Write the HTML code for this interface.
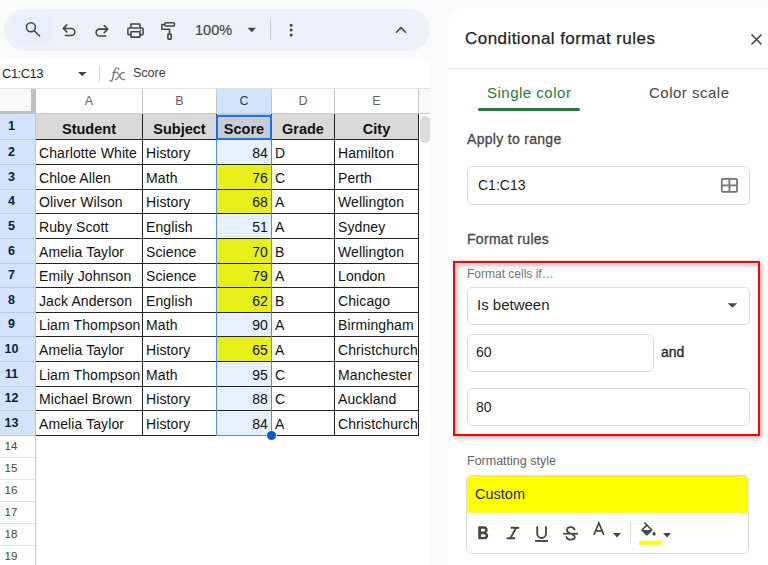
<!DOCTYPE html><html><head><meta charset="utf-8"><style>
*{margin:0;padding:0;box-sizing:border-box}
html,body{width:768px;height:565px;overflow:hidden;background:#f9fbfd;font-family:"Liberation Sans", sans-serif;position:relative}
.a{position:absolute}
.t{position:absolute;white-space:nowrap;font-family:"Liberation Sans", sans-serif}
.cell{position:absolute;font-size:14px;color:#111;white-space:nowrap;overflow:hidden;letter-spacing:0.1px}
</style></head><body><div class="a" style="left:4px;top:9px;width:426px;height:42px;border-radius:21px;background:#eef2f8"></div>
<div class="a" style="left:14px;top:15px;width:39px;height:29px;background:#e9effb;border-radius:2px"></div>
<div class="t" style="left:195px;top:22px;font-size:14.5px;color:#444746;line-height:17px;-webkit-text-stroke:0.2px #444746">100%</div>
<div class="a" style="left:0;top:60px;width:430px;height:28px;background:#fff"></div>
<div class="t" style="left:2px;top:66px;font-size:13px;color:#1f1f1f;line-height:15px;letter-spacing:-0.5px">C1:C13</div>
<div class="a" style="left:99px;top:66px;width:1px;height:17px;background:#dadce0"></div>
<div class="t" style="left:133px;top:66px;font-size:12.5px;color:#3c4043;line-height:15px">Score</div>
<div class="a" style="left:0;top:88px;width:430px;height:477px;background:#fff"></div>
<div class="a" style="left:0;top:88px;width:430px;height:1px;background:#e1e3e1"></div>
<div class="a" style="left:0;top:89px;width:36px;height:26px;background:#c0c0c0"></div>
<div class="a" style="left:0;top:89px;width:31px;height:22px;background:#f8f9fa"></div>
<div class="a" style="left:36px;top:89px;width:106px;height:25px;background:#fff"></div>
<div class="t" style="left:36px;top:96px;width:106px;text-align:center;font-size:12.5px;line-height:11px;color:#5f6368">A</div>
<div class="a" style="left:142px;top:89px;width:1px;height:25px;background:#c7c7c7"></div>
<div class="a" style="left:143px;top:89px;width:73px;height:25px;background:#fff"></div>
<div class="t" style="left:143px;top:96px;width:73px;text-align:center;font-size:12.5px;line-height:11px;color:#5f6368">B</div>
<div class="a" style="left:216px;top:89px;width:1px;height:25px;background:#c7c7c7"></div>
<div class="a" style="left:217px;top:89px;width:54px;height:25px;background:#d3e3fd"></div>
<div class="t" style="left:217px;top:96px;width:54px;text-align:center;font-size:12.5px;line-height:11px;color:#1b3a6b">C</div>
<div class="a" style="left:271px;top:89px;width:1px;height:25px;background:#c7c7c7"></div>
<div class="a" style="left:272px;top:89px;width:62px;height:25px;background:#fff"></div>
<div class="t" style="left:272px;top:96px;width:62px;text-align:center;font-size:12.5px;line-height:11px;color:#5f6368">D</div>
<div class="a" style="left:334px;top:89px;width:1px;height:25px;background:#c7c7c7"></div>
<div class="a" style="left:335px;top:89px;width:83px;height:25px;background:#fff"></div>
<div class="t" style="left:335px;top:96px;width:83px;text-align:center;font-size:12.5px;line-height:11px;color:#5f6368">E</div>
<div class="a" style="left:418px;top:89px;width:1px;height:25px;background:#c7c7c7"></div>
<div class="a" style="left:419px;top:89px;width:11px;height:25px;background:#f8f9fa"></div>
<div class="a" style="left:36px;top:113px;width:394px;height:1px;background:#c7c7c7"></div>
<div class="a" style="left:0;top:114px;width:35px;height:25px;background:#d3e3fd"></div>
<div class="t" style="left:0;top:114px;width:23px;text-align:center;font-size:12.5px;font-weight:bold;line-height:25px;color:#041e49">1</div>
<div class="a" style="left:0;top:139px;width:35px;height:1px;background:#c2c9d6"></div>
<div class="a" style="left:0;top:140px;width:35px;height:24px;background:#d3e3fd"></div>
<div class="t" style="left:0;top:140px;width:23px;text-align:center;font-size:12.5px;font-weight:bold;line-height:24px;color:#041e49">2</div>
<div class="a" style="left:0;top:164px;width:35px;height:1px;background:#c2c9d6"></div>
<div class="a" style="left:0;top:165px;width:35px;height:24px;background:#d3e3fd"></div>
<div class="t" style="left:0;top:165px;width:23px;text-align:center;font-size:12.5px;font-weight:bold;line-height:24px;color:#041e49">3</div>
<div class="a" style="left:0;top:189px;width:35px;height:1px;background:#c2c9d6"></div>
<div class="a" style="left:0;top:190px;width:35px;height:23px;background:#d3e3fd"></div>
<div class="t" style="left:0;top:190px;width:23px;text-align:center;font-size:12.5px;font-weight:bold;line-height:23px;color:#041e49">4</div>
<div class="a" style="left:0;top:213px;width:35px;height:1px;background:#c2c9d6"></div>
<div class="a" style="left:0;top:214px;width:35px;height:24px;background:#d3e3fd"></div>
<div class="t" style="left:0;top:214px;width:23px;text-align:center;font-size:12.5px;font-weight:bold;line-height:24px;color:#041e49">5</div>
<div class="a" style="left:0;top:238px;width:35px;height:1px;background:#c2c9d6"></div>
<div class="a" style="left:0;top:239px;width:35px;height:24px;background:#d3e3fd"></div>
<div class="t" style="left:0;top:239px;width:23px;text-align:center;font-size:12.5px;font-weight:bold;line-height:24px;color:#041e49">6</div>
<div class="a" style="left:0;top:263px;width:35px;height:1px;background:#c2c9d6"></div>
<div class="a" style="left:0;top:264px;width:35px;height:23px;background:#d3e3fd"></div>
<div class="t" style="left:0;top:264px;width:23px;text-align:center;font-size:12.5px;font-weight:bold;line-height:23px;color:#041e49">7</div>
<div class="a" style="left:0;top:287px;width:35px;height:1px;background:#c2c9d6"></div>
<div class="a" style="left:0;top:288px;width:35px;height:24px;background:#d3e3fd"></div>
<div class="t" style="left:0;top:288px;width:23px;text-align:center;font-size:12.5px;font-weight:bold;line-height:24px;color:#041e49">8</div>
<div class="a" style="left:0;top:312px;width:35px;height:1px;background:#c2c9d6"></div>
<div class="a" style="left:0;top:313px;width:35px;height:23px;background:#d3e3fd"></div>
<div class="t" style="left:0;top:313px;width:23px;text-align:center;font-size:12.5px;font-weight:bold;line-height:23px;color:#041e49">9</div>
<div class="a" style="left:0;top:336px;width:35px;height:1px;background:#c2c9d6"></div>
<div class="a" style="left:0;top:337px;width:35px;height:24px;background:#d3e3fd"></div>
<div class="t" style="left:0;top:337px;width:23px;text-align:center;font-size:12.5px;font-weight:bold;line-height:24px;color:#041e49">10</div>
<div class="a" style="left:0;top:361px;width:35px;height:1px;background:#c2c9d6"></div>
<div class="a" style="left:0;top:362px;width:35px;height:24px;background:#d3e3fd"></div>
<div class="t" style="left:0;top:362px;width:23px;text-align:center;font-size:12.5px;font-weight:bold;line-height:24px;color:#041e49">11</div>
<div class="a" style="left:0;top:386px;width:35px;height:1px;background:#c2c9d6"></div>
<div class="a" style="left:0;top:387px;width:35px;height:23px;background:#d3e3fd"></div>
<div class="t" style="left:0;top:387px;width:23px;text-align:center;font-size:12.5px;font-weight:bold;line-height:23px;color:#041e49">12</div>
<div class="a" style="left:0;top:410px;width:35px;height:1px;background:#c2c9d6"></div>
<div class="a" style="left:0;top:411px;width:35px;height:24px;background:#d3e3fd"></div>
<div class="t" style="left:0;top:411px;width:23px;text-align:center;font-size:12.5px;font-weight:bold;line-height:24px;color:#041e49">13</div>
<div class="a" style="left:0;top:435px;width:35px;height:1px;background:#c2c9d6"></div>
<div class="a" style="left:35px;top:114px;width:1px;height:451px;background:#c7c7c7"></div>
<div class="t" style="left:0;top:436px;width:22px;text-align:center;font-size:11.5px;line-height:21px;color:#444746">14</div>
<div class="a" style="left:0;top:457px;width:35px;height:1px;background:#e1e3e1"></div>
<div class="t" style="left:0;top:458px;width:22px;text-align:center;font-size:11.5px;line-height:21px;color:#444746">15</div>
<div class="a" style="left:0;top:479px;width:35px;height:1px;background:#e1e3e1"></div>
<div class="t" style="left:0;top:480px;width:22px;text-align:center;font-size:11.5px;line-height:21px;color:#444746">16</div>
<div class="a" style="left:0;top:501px;width:35px;height:1px;background:#e1e3e1"></div>
<div class="t" style="left:0;top:502px;width:22px;text-align:center;font-size:11.5px;line-height:21px;color:#444746">17</div>
<div class="a" style="left:0;top:523px;width:35px;height:1px;background:#e1e3e1"></div>
<div class="t" style="left:0;top:524px;width:22px;text-align:center;font-size:11.5px;line-height:21px;color:#444746">18</div>
<div class="a" style="left:0;top:545px;width:35px;height:1px;background:#e1e3e1"></div>
<div class="t" style="left:0;top:546px;width:22px;text-align:center;font-size:11.5px;line-height:21px;color:#444746">19</div>
<div class="a" style="left:0;top:567px;width:35px;height:1px;background:#e1e3e1"></div>
<div class="a" style="left:36px;top:114px;width:106px;height:25px;background:#d9d9d9"></div>
<div class="cell" style="left:36px;top:114px;width:106px;height:25px;line-height:30px;text-align:center;font-weight:bold;font-size:14.5px;letter-spacing:0px">Student</div>
<div class="a" style="left:143px;top:114px;width:73px;height:25px;background:#d9d9d9"></div>
<div class="cell" style="left:143px;top:114px;width:73px;height:25px;line-height:30px;text-align:center;font-weight:bold;font-size:14.5px;letter-spacing:0px">Subject</div>
<div class="a" style="left:217px;top:114px;width:54px;height:25px;background:#c5cddb"></div>
<div class="cell" style="left:217px;top:114px;width:54px;height:25px;line-height:30px;text-align:center;font-weight:bold;font-size:14.5px;letter-spacing:0px">Score</div>
<div class="a" style="left:272px;top:114px;width:62px;height:25px;background:#d9d9d9"></div>
<div class="cell" style="left:272px;top:114px;width:62px;height:25px;line-height:30px;text-align:center;font-weight:bold;font-size:14.5px;letter-spacing:0px">Grade</div>
<div class="a" style="left:335px;top:114px;width:83px;height:25px;background:#d9d9d9"></div>
<div class="cell" style="left:335px;top:114px;width:83px;height:25px;line-height:30px;text-align:center;font-weight:bold;font-size:14.5px;letter-spacing:0px">City</div>
<div class="a" style="left:36px;top:140px;width:106px;height:24px;background:#fff"></div>
<div class="cell" style="left:39px;top:140px;width:103px;height:24px;line-height:26px">Charlotte White</div>
<div class="a" style="left:143px;top:140px;width:73px;height:24px;background:#fff"></div>
<div class="cell" style="left:146px;top:140px;width:70px;height:24px;line-height:26px">History</div>
<div class="a" style="left:217px;top:140px;width:54px;height:24px;background:#e7f0fd"></div>
<div class="cell" style="left:217px;top:140px;width:51px;height:24px;line-height:26px;text-align:right">84</div>
<div class="a" style="left:272px;top:140px;width:62px;height:24px;background:#fff"></div>
<div class="cell" style="left:275px;top:140px;width:59px;height:24px;line-height:26px">D</div>
<div class="a" style="left:335px;top:140px;width:83px;height:24px;background:#fff"></div>
<div class="cell" style="left:338px;top:140px;width:80px;height:24px;line-height:26px">Hamilton</div>
<div class="a" style="left:36px;top:165px;width:106px;height:24px;background:#fff"></div>
<div class="cell" style="left:39px;top:165px;width:103px;height:24px;line-height:26px">Chloe Allen</div>
<div class="a" style="left:143px;top:165px;width:73px;height:24px;background:#fff"></div>
<div class="cell" style="left:146px;top:165px;width:70px;height:24px;line-height:26px">Math</div>
<div class="a" style="left:217px;top:165px;width:54px;height:24px;background:#e7f018"></div>
<div class="cell" style="left:217px;top:165px;width:51px;height:24px;line-height:26px;text-align:right">76</div>
<div class="a" style="left:272px;top:165px;width:62px;height:24px;background:#fff"></div>
<div class="cell" style="left:275px;top:165px;width:59px;height:24px;line-height:26px">C</div>
<div class="a" style="left:335px;top:165px;width:83px;height:24px;background:#fff"></div>
<div class="cell" style="left:338px;top:165px;width:80px;height:24px;line-height:26px">Perth</div>
<div class="a" style="left:36px;top:190px;width:106px;height:23px;background:#fff"></div>
<div class="cell" style="left:39px;top:190px;width:103px;height:23px;line-height:25px">Oliver Wilson</div>
<div class="a" style="left:143px;top:190px;width:73px;height:23px;background:#fff"></div>
<div class="cell" style="left:146px;top:190px;width:70px;height:23px;line-height:25px">History</div>
<div class="a" style="left:217px;top:190px;width:54px;height:23px;background:#e7f018"></div>
<div class="cell" style="left:217px;top:190px;width:51px;height:23px;line-height:25px;text-align:right">68</div>
<div class="a" style="left:272px;top:190px;width:62px;height:23px;background:#fff"></div>
<div class="cell" style="left:275px;top:190px;width:59px;height:23px;line-height:25px">A</div>
<div class="a" style="left:335px;top:190px;width:83px;height:23px;background:#fff"></div>
<div class="cell" style="left:338px;top:190px;width:80px;height:23px;line-height:25px">Wellington</div>
<div class="a" style="left:36px;top:214px;width:106px;height:24px;background:#fff"></div>
<div class="cell" style="left:39px;top:214px;width:103px;height:24px;line-height:26px">Ruby Scott</div>
<div class="a" style="left:143px;top:214px;width:73px;height:24px;background:#fff"></div>
<div class="cell" style="left:146px;top:214px;width:70px;height:24px;line-height:26px">English</div>
<div class="a" style="left:217px;top:214px;width:54px;height:24px;background:#e7f0fd"></div>
<div class="cell" style="left:217px;top:214px;width:51px;height:24px;line-height:26px;text-align:right">51</div>
<div class="a" style="left:272px;top:214px;width:62px;height:24px;background:#fff"></div>
<div class="cell" style="left:275px;top:214px;width:59px;height:24px;line-height:26px">A</div>
<div class="a" style="left:335px;top:214px;width:83px;height:24px;background:#fff"></div>
<div class="cell" style="left:338px;top:214px;width:80px;height:24px;line-height:26px">Sydney</div>
<div class="a" style="left:36px;top:239px;width:106px;height:24px;background:#fff"></div>
<div class="cell" style="left:39px;top:239px;width:103px;height:24px;line-height:26px">Amelia Taylor</div>
<div class="a" style="left:143px;top:239px;width:73px;height:24px;background:#fff"></div>
<div class="cell" style="left:146px;top:239px;width:70px;height:24px;line-height:26px">Science</div>
<div class="a" style="left:217px;top:239px;width:54px;height:24px;background:#e7f018"></div>
<div class="cell" style="left:217px;top:239px;width:51px;height:24px;line-height:26px;text-align:right">70</div>
<div class="a" style="left:272px;top:239px;width:62px;height:24px;background:#fff"></div>
<div class="cell" style="left:275px;top:239px;width:59px;height:24px;line-height:26px">B</div>
<div class="a" style="left:335px;top:239px;width:83px;height:24px;background:#fff"></div>
<div class="cell" style="left:338px;top:239px;width:80px;height:24px;line-height:26px">Wellington</div>
<div class="a" style="left:36px;top:264px;width:106px;height:23px;background:#fff"></div>
<div class="cell" style="left:39px;top:264px;width:103px;height:23px;line-height:25px">Emily Johnson</div>
<div class="a" style="left:143px;top:264px;width:73px;height:23px;background:#fff"></div>
<div class="cell" style="left:146px;top:264px;width:70px;height:23px;line-height:25px">Science</div>
<div class="a" style="left:217px;top:264px;width:54px;height:23px;background:#e7f018"></div>
<div class="cell" style="left:217px;top:264px;width:51px;height:23px;line-height:25px;text-align:right">79</div>
<div class="a" style="left:272px;top:264px;width:62px;height:23px;background:#fff"></div>
<div class="cell" style="left:275px;top:264px;width:59px;height:23px;line-height:25px">A</div>
<div class="a" style="left:335px;top:264px;width:83px;height:23px;background:#fff"></div>
<div class="cell" style="left:338px;top:264px;width:80px;height:23px;line-height:25px">London</div>
<div class="a" style="left:36px;top:288px;width:106px;height:24px;background:#fff"></div>
<div class="cell" style="left:39px;top:288px;width:103px;height:24px;line-height:26px">Jack Anderson</div>
<div class="a" style="left:143px;top:288px;width:73px;height:24px;background:#fff"></div>
<div class="cell" style="left:146px;top:288px;width:70px;height:24px;line-height:26px">English</div>
<div class="a" style="left:217px;top:288px;width:54px;height:24px;background:#e7f018"></div>
<div class="cell" style="left:217px;top:288px;width:51px;height:24px;line-height:26px;text-align:right">62</div>
<div class="a" style="left:272px;top:288px;width:62px;height:24px;background:#fff"></div>
<div class="cell" style="left:275px;top:288px;width:59px;height:24px;line-height:26px">B</div>
<div class="a" style="left:335px;top:288px;width:83px;height:24px;background:#fff"></div>
<div class="cell" style="left:338px;top:288px;width:80px;height:24px;line-height:26px">Chicago</div>
<div class="a" style="left:36px;top:313px;width:106px;height:23px;background:#fff"></div>
<div class="cell" style="left:39px;top:313px;width:103px;height:23px;line-height:25px">Liam Thompson</div>
<div class="a" style="left:143px;top:313px;width:73px;height:23px;background:#fff"></div>
<div class="cell" style="left:146px;top:313px;width:70px;height:23px;line-height:25px">Math</div>
<div class="a" style="left:217px;top:313px;width:54px;height:23px;background:#e7f0fd"></div>
<div class="cell" style="left:217px;top:313px;width:51px;height:23px;line-height:25px;text-align:right">90</div>
<div class="a" style="left:272px;top:313px;width:62px;height:23px;background:#fff"></div>
<div class="cell" style="left:275px;top:313px;width:59px;height:23px;line-height:25px">A</div>
<div class="a" style="left:335px;top:313px;width:83px;height:23px;background:#fff"></div>
<div class="cell" style="left:338px;top:313px;width:80px;height:23px;line-height:25px">Birmingham</div>
<div class="a" style="left:36px;top:337px;width:106px;height:24px;background:#fff"></div>
<div class="cell" style="left:39px;top:337px;width:103px;height:24px;line-height:26px">Amelia Taylor</div>
<div class="a" style="left:143px;top:337px;width:73px;height:24px;background:#fff"></div>
<div class="cell" style="left:146px;top:337px;width:70px;height:24px;line-height:26px">History</div>
<div class="a" style="left:217px;top:337px;width:54px;height:24px;background:#e7f018"></div>
<div class="cell" style="left:217px;top:337px;width:51px;height:24px;line-height:26px;text-align:right">65</div>
<div class="a" style="left:272px;top:337px;width:62px;height:24px;background:#fff"></div>
<div class="cell" style="left:275px;top:337px;width:59px;height:24px;line-height:26px">A</div>
<div class="a" style="left:335px;top:337px;width:83px;height:24px;background:#fff"></div>
<div class="cell" style="left:338px;top:337px;width:80px;height:24px;line-height:26px">Christchurch</div>
<div class="a" style="left:36px;top:362px;width:106px;height:24px;background:#fff"></div>
<div class="cell" style="left:39px;top:362px;width:103px;height:24px;line-height:26px">Liam Thompson</div>
<div class="a" style="left:143px;top:362px;width:73px;height:24px;background:#fff"></div>
<div class="cell" style="left:146px;top:362px;width:70px;height:24px;line-height:26px">Math</div>
<div class="a" style="left:217px;top:362px;width:54px;height:24px;background:#e7f0fd"></div>
<div class="cell" style="left:217px;top:362px;width:51px;height:24px;line-height:26px;text-align:right">95</div>
<div class="a" style="left:272px;top:362px;width:62px;height:24px;background:#fff"></div>
<div class="cell" style="left:275px;top:362px;width:59px;height:24px;line-height:26px">C</div>
<div class="a" style="left:335px;top:362px;width:83px;height:24px;background:#fff"></div>
<div class="cell" style="left:338px;top:362px;width:80px;height:24px;line-height:26px">Manchester</div>
<div class="a" style="left:36px;top:387px;width:106px;height:23px;background:#fff"></div>
<div class="cell" style="left:39px;top:387px;width:103px;height:23px;line-height:25px">Michael Brown</div>
<div class="a" style="left:143px;top:387px;width:73px;height:23px;background:#fff"></div>
<div class="cell" style="left:146px;top:387px;width:70px;height:23px;line-height:25px">History</div>
<div class="a" style="left:217px;top:387px;width:54px;height:23px;background:#e7f0fd"></div>
<div class="cell" style="left:217px;top:387px;width:51px;height:23px;line-height:25px;text-align:right">88</div>
<div class="a" style="left:272px;top:387px;width:62px;height:23px;background:#fff"></div>
<div class="cell" style="left:275px;top:387px;width:59px;height:23px;line-height:25px">C</div>
<div class="a" style="left:335px;top:387px;width:83px;height:23px;background:#fff"></div>
<div class="cell" style="left:338px;top:387px;width:80px;height:23px;line-height:25px">Auckland</div>
<div class="a" style="left:36px;top:411px;width:106px;height:24px;background:#fff"></div>
<div class="cell" style="left:39px;top:411px;width:103px;height:24px;line-height:26px">Amelia Taylor</div>
<div class="a" style="left:143px;top:411px;width:73px;height:24px;background:#fff"></div>
<div class="cell" style="left:146px;top:411px;width:70px;height:24px;line-height:26px">History</div>
<div class="a" style="left:217px;top:411px;width:54px;height:24px;background:#e7f0fd"></div>
<div class="cell" style="left:217px;top:411px;width:51px;height:24px;line-height:26px;text-align:right">84</div>
<div class="a" style="left:272px;top:411px;width:62px;height:24px;background:#fff"></div>
<div class="cell" style="left:275px;top:411px;width:59px;height:24px;line-height:26px">A</div>
<div class="a" style="left:335px;top:411px;width:83px;height:24px;background:#fff"></div>
<div class="cell" style="left:338px;top:411px;width:80px;height:24px;line-height:26px">Christchurch</div>
<div class="a" style="left:36px;top:139px;width:383px;height:1px;background:#222"></div>
<div class="a" style="left:36px;top:164px;width:383px;height:1px;background:#222"></div>
<div class="a" style="left:36px;top:189px;width:383px;height:1px;background:#222"></div>
<div class="a" style="left:36px;top:213px;width:383px;height:1px;background:#222"></div>
<div class="a" style="left:36px;top:238px;width:383px;height:1px;background:#222"></div>
<div class="a" style="left:36px;top:263px;width:383px;height:1px;background:#222"></div>
<div class="a" style="left:36px;top:287px;width:383px;height:1px;background:#222"></div>
<div class="a" style="left:36px;top:312px;width:383px;height:1px;background:#222"></div>
<div class="a" style="left:36px;top:336px;width:383px;height:1px;background:#222"></div>
<div class="a" style="left:36px;top:361px;width:383px;height:1px;background:#222"></div>
<div class="a" style="left:36px;top:386px;width:383px;height:1px;background:#222"></div>
<div class="a" style="left:36px;top:410px;width:383px;height:1px;background:#222"></div>
<div class="a" style="left:36px;top:435px;width:383px;height:1px;background:#222"></div>
<div class="a" style="left:142px;top:114px;width:1px;height:322px;background:#222"></div>
<div class="a" style="left:216px;top:114px;width:1px;height:322px;background:#222"></div>
<div class="a" style="left:271px;top:114px;width:1px;height:322px;background:#222"></div>
<div class="a" style="left:334px;top:114px;width:1px;height:322px;background:#222"></div>
<div class="a" style="left:418px;top:114px;width:1px;height:322px;background:#222"></div>
<div class="a" style="left:216px;top:115px;width:56px;height:321px;border:1px solid #4d8ef2"></div>
<div class="a" style="left:216px;top:115px;width:56px;height:25px;border:2px solid #1a73e8"></div>
<div class="a" style="left:266px;top:430px;width:11px;height:11px;border-radius:50%;background:#0b57d0;border:1px solid #fff"></div>
<div class="a" style="left:419px;top:114px;width:11px;height:451px;background:#fff"></div>
<div class="a" style="left:420px;top:116px;width:10px;height:27px;border-radius:5px;background:#dadce0"></div>
<div class="a" style="left:448px;top:8px;width:330px;height:570px;background:#fff;border-top-left-radius:16px"></div>
<div class="t" style="left:465px;top:29px;font-size:17px;line-height:20px;color:#1f1f1f;letter-spacing:0.45px;-webkit-text-stroke:0.25px #1f1f1f">Conditional format rules</div>
<div class="a" style="left:448px;top:68px;width:320px;height:1px;background:#e3e3e3"></div>
<div class="t" style="left:487px;top:84px;font-size:15px;line-height:18px;color:#188038;letter-spacing:0.5px">Single color</div>
<div class="a" style="left:478px;top:108px;width:102px;height:3px;border-radius:2px;background:#188038"></div>
<div class="t" style="left:649px;top:84px;font-size:15px;line-height:18px;color:#444746;letter-spacing:0.5px">Color scale</div>
<div class="t" style="left:467px;top:131px;font-size:14px;line-height:17px;color:#444746;letter-spacing:0.3px;-webkit-text-stroke:0.3px #444746">Apply to range</div>
<div class="a" style="left:467px;top:166px;width:283px;height:39px;border:1px solid #dadce0;border-radius:5px"></div>
<div class="t" style="left:478px;top:177px;font-size:14px;line-height:17px;color:#1f1f1f">C1:C13</div>
<div class="t" style="left:467px;top:231px;font-size:14px;line-height:17px;color:#444746;letter-spacing:0.3px;-webkit-text-stroke:0.3px #444746">Format rules</div>
<div class="a" style="left:453px;top:261px;width:307px;height:175px;border:2px solid #ff0000;box-shadow:2px 2px 4px rgba(0,0,0,0.28), inset 3px 3px 4px rgba(0,0,0,0.22)"></div>
<div class="t" style="left:467px;top:267px;font-size:12px;line-height:14px;color:#70757a">Format cells if…</div>
<div class="a" style="left:467px;top:287px;width:283px;height:38px;border:1px solid #dadce0;border-radius:5px"></div>
<div class="t" style="left:477px;top:296px;font-size:15px;line-height:18px;color:#1f1f1f">Is between</div>
<div class="a" style="left:467px;top:334px;width:187px;height:38px;border:1px solid #dadce0;border-radius:5px"></div>
<div class="t" style="left:476px;top:344px;font-size:14px;line-height:17px;color:#1f1f1f">60</div>
<div class="t" style="left:661px;top:344px;font-size:14px;line-height:17px;color:#1f1f1f;-webkit-text-stroke:0.3px #1f1f1f">and</div>
<div class="a" style="left:467px;top:388px;width:283px;height:38px;border:1px solid #dadce0;border-radius:5px"></div>
<div class="t" style="left:476px;top:399px;font-size:14px;line-height:17px;color:#1f1f1f">80</div>
<div class="t" style="left:467px;top:454px;font-size:12.5px;line-height:15px;color:#5f6368">Formatting style</div>
<div class="a" style="left:466px;top:475px;width:283px;height:79px;border:1px solid #dadce0;border-radius:5px;overflow:hidden"><div style="height:37px;background:#ffff00"></div></div>
<div class="t" style="left:475px;top:486px;font-size:14.5px;line-height:17px;color:#1f1f1f">Custom</div>
<div class="a" style="left:630px;top:522px;width:1px;height:21px;background:#dadce0"></div>
<div class="a" style="left:639px;top:541px;width:22px;height:4px;background:#ffff00"></div>
<svg class="a" style="left:0;top:0" width="768" height="565" viewBox="0 0 768 565"><path d="M119 69.2 Q118.2 67.6 116.6 67.9 Q115 68.3 114.4 71 L112.6 79 Q112 81.6 110 80.6" fill="none" stroke="#7a7f85" stroke-width="1.4" stroke-linecap="round"/><path d="M112.2 72.5 H117.6" fill="none" stroke="#7a7f85" stroke-width="1.3"/><path d="M115.4 72.4 Q117.6 72 118.6 74 L121.2 78.6 Q122.2 80 124.6 79.4 M124.2 72.6 Q122.6 72.2 121.2 73.6 L117.4 78.4 Q116.6 79.6 115.4 79.6" fill="none" stroke="#7a7f85" stroke-width="1.4" stroke-linecap="round"/><path transform="translate(471.7 522.6) scale(0.93)" d="M15.6 10.79c.97-.67 1.65-1.77 1.65-2.79 0-2.26-1.75-4-4-4H7v14h7.04c2.09 0 3.71-1.7 3.71-3.79 0-1.52-.86-2.82-2.15-3.42zM10 6.5h3c.83 0 1.5.67 1.5 1.5s-.67 1.5-1.5 1.5h-3v-3zm3.5 9H10v-3h3.5c.83 0 1.5.67 1.5 1.5s-.67 1.5-1.5 1.5z" fill="#444746"/><path d="M510.6 527.7 H519.2 M506.7 538.2 H515.2 M516.2 527.7 L510.4 538.2" fill="none" stroke="#444746" stroke-width="1.9"/><path d="M537.2 526.3 V533.6 A4.4 4.4 0 0 0 546 533.6 V526.3" fill="none" stroke="#444746" stroke-width="1.8"/><path d="M535.1 541 H548" fill="none" stroke="#444746" stroke-width="1.9"/><path d="M563.2 533.7 H578" fill="none" stroke="#444746" stroke-width="1.8"/><path d="M574.6 529.6 Q573.6 527.2 570.7 527.2 Q566.9 527.2 566.9 530.1 Q566.9 531.9 569.2 532.9 M572.6 534.6 Q574.8 535.6 574.8 537.1 Q574.8 539.7 570.7 539.7 Q567.2 539.7 566.4 537" fill="none" stroke="#444746" stroke-width="1.8" stroke-linecap="round"/><path d="M593.9 534.9 L598.85 522.9 L603.8 534.9 M595.6 530.8 H602.1" fill="none" stroke="#444746" stroke-width="1.7"/><circle cx="30.9" cy="27.3" r="4.5" fill="none" stroke="#444746" stroke-width="1.55" stroke-linecap="round" stroke-linejoin="round"/><path d="M34.3 30.7 L39.6 36" fill="none" stroke="#444746" stroke-width="1.55" stroke-linecap="round" stroke-linejoin="round"/><path d="M66.8 24.9 L63.3 28.4 L66.8 31.9 M63.5 28.4 H71.3 A3.55 3.55 0 0 1 71.3 35.5 H65.3" fill="none" stroke="#444746" stroke-width="1.55" stroke-linecap="round" stroke-linejoin="round"/><path d="M104.2 25.5 L107.7 29.1 L104.2 32.6 M107.5 29.1 H99.5 A3.4 3.4 0 0 0 99.5 35.9 H105.7" fill="none" stroke="#444746" stroke-width="1.55" stroke-linecap="round" stroke-linejoin="round"/><path d="M130.9 27.2 V23.9 H139.9 V27.2" fill="none" stroke="#444746" stroke-width="1.55" stroke-linecap="round" stroke-linejoin="round"/><path d="M130.9 34.6 H128.6 Q127.9 34.6 127.9 33.9 V29 Q127.9 27.9 129 27.9 H142 Q143.1 27.9 143.1 29 V33.9 Q143.1 34.6 142.4 34.6 H139.9" fill="none" stroke="#444746" stroke-width="1.55" stroke-linecap="round" stroke-linejoin="round"/><rect x="130.9" y="31.8" width="9" height="5.3" fill="none" stroke="#444746" stroke-width="1.55" stroke-linecap="round" stroke-linejoin="round"/><circle cx="140.6" cy="30.4" r="0.8" fill="#444746"/><rect x="164.8" y="22.7" width="9.6" height="3.3" rx="0.8" fill="none" stroke="#444746" stroke-width="1.55" stroke-linecap="round" stroke-linejoin="round"/><path d="M164.6 24.4 H161.8 V29.2 H169.5 V33.6" fill="none" stroke="#444746" stroke-width="1.55" stroke-linecap="round" stroke-linejoin="round"/><rect x="167.9" y="34.1" width="3.3" height="5" rx="0.6" fill="none" stroke="#444746" stroke-width="1.55" stroke-linecap="round" stroke-linejoin="round"/><path d="M247.5 27.8 H256 L251.75 32.2 Z" fill="#444746"/><rect x="270" y="19.5" width="1" height="20" fill="#c7c7c7"/><circle cx="291.1" cy="25.3" r="1.5" fill="#444746"/><circle cx="291.1" cy="30.1" r="1.5" fill="#444746"/><circle cx="291.1" cy="34.9" r="1.5" fill="#444746"/><path d="M396.5 32.3 L401 27.6 L405.5 32.3" fill="none" stroke="#444746" stroke-width="1.55" stroke-linecap="round" stroke-linejoin="round" stroke-width="1.9"/><path d="M78 72 H86.5 L82.25 76.3 Z" fill="#444746"/><path d="M751.5 34.5 L761.5 44.5 M761.5 34.5 L751.5 44.5" fill="none" stroke="#444746" stroke-width="1.6"/><rect x="721.8" y="178.8" width="15.2" height="13" rx="1" fill="none" stroke="#757575" stroke-width="1.8"/><path d="M729.4 178.8 V191.8 M721.8 185.3 H737" stroke="#757575" stroke-width="1.8"/><path d="M727.7 303.3 H737.2 L732.45 307.8 Z" fill="#444746"/><path d="M613 533 H621 L617 537.5 Z" fill="#444746"/><path d="M663 533 H671 L667 537.5 Z" fill="#444746"/><path transform="translate(638.9 522) scale(0.8)" d="M16.56 8.94L7.62 0 6.21 1.41l2.38 2.38-5.15 5.15c-.59.59-.59 1.54 0 2.12l5.5 5.5c.29.29.68.44 1.06.44s.77-.15 1.06-.44l5.5-5.5c.59-.58.59-1.53 0-2.12zM5.21 10L10 5.21 14.79 10H5.21zM19 11.5s-2 2.17-2 3.5c0 1.1.9 2 2 2s2-.9 2-2c0-1.33-2-3.5-2-3.5z" fill="#444746"/></svg></body></html>
